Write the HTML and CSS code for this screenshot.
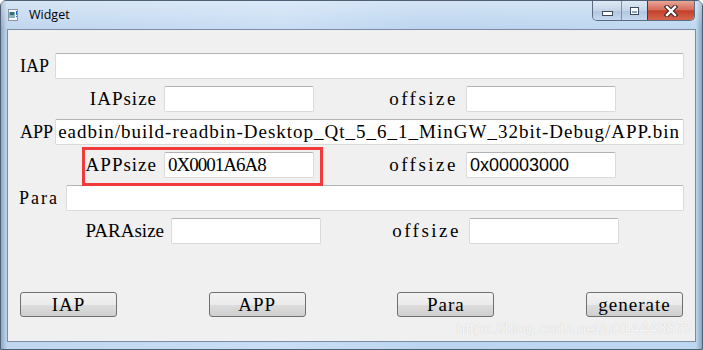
FILE: index.html
```html
<!DOCTYPE html>
<html lang="en">
<head>
    <meta charset="UTF-8">
    <title>Widget</title>
    <link rel="stylesheet" href="styles.css">
</head>
<body>
    <div class="window">
        <div class="titlebar">
            <svg class="app-icon" width="10" height="12" viewBox="0 0 10 12">
                <rect x="0.5" y="0.5" width="9" height="11" fill="#f4f6f8" stroke="#8a96a4"/>
                <rect x="1.5" y="3" width="5" height="6" fill="#2f6f78"/>
                <rect x="2" y="6" width="4" height="3" fill="#7fb4b8"/>
                <rect x="8" y="2" width="1" height="4" fill="#2a62c8"/>
                <rect x="8" y="7" width="1" height="1" fill="#2a62c8"/>
            </svg>
            <span class="title">Widget</span>
            <div class="caption-buttons">
                <div class="cap-btn min"><span class="min-glyph"></span></div>
                <div class="cap-btn max"><span class="max-glyph"></span></div>
                <div class="cap-btn close">
                    <svg width="14" height="12" viewBox="0 0 14 12">
                        <path d="M3 2 L11 10 M11 2 L3 10" stroke="#3a2a2a" stroke-width="4.5" stroke-linecap="square"/>
                        <path d="M3 2 L11 10 M11 2 L3 10" stroke="#ffffff" stroke-width="2.4" stroke-linecap="square"/>
                    </svg>
                </div>
            </div>
        </div>

        <div class="client">
            <div class="form">
                <div class="full-row">
                    <span class="name">IAP</span>
                    <div class="field"></div>
                </div>
                <div class="size-row">
                    <span class="name">IAPsize</span>
                    <div class="field small"></div>
                    <span class="name off">offsize</span>
                    <div class="field small"></div>
                </div>
                <div class="full-row">
                    <span class="name">APP</span>
                    <div class="field path"><span>eadbin/build-readbin-Desktop_Qt_5_6_1_MinGW_32bit-Debug/APP.bin</span></div>
                </div>
                <div class="size-row marked">
                    <span class="name">APPsize</span>
                    <div class="field small hex">0X0001A6A8</div>
                    <span class="name off">offsize</span>
                    <div class="field small sans">0x00003000</div>
                    <div class="highlight"></div>
                </div>
                <div class="full-row para">
                    <span class="name">Para</span>
                    <div class="field"></div>
                </div>
                <div class="size-row para">
                    <span class="name">PARAsize</span>
                    <div class="field small"></div>
                    <span class="name off">offsize</span>
                    <div class="field small"></div>
                </div>
            </div>

            <div class="actions">
                <button class="btn">IAP</button>
                <button class="btn">APP</button>
                <button class="btn">Para</button>
                <button class="btn">generate</button>
            </div>

            <div class="watermark">https://blog.csdn.net/u014448875</div>
        </div>
    </div>
</body>
</html>
```

FILE: styles.css
```css
body {
    margin: 0;
    width: 703px;
    height: 350px;
    overflow: hidden;
    background: #ffffff;
}

.window {
    box-sizing: border-box;
    width: 703px;
    height: 350px;
    display: flex;
    flex-direction: column;
    border: 1px solid #4f6075;
    border-radius: 6px 6px 0 0;
    background: linear-gradient(to right, #8fa9c4 0px, #bfd6ee 6px, #c9def4 40%, #bcd5ef 60%, #bed7f0 calc(100% - 6px), #8aa4bf 100%);
}

.titlebar {
    height: 28px;
    display: flex;
    align-items: flex-start;
    padding-left: 7px;
    background: linear-gradient(to bottom, rgba(255, 255, 255, 0.35), rgba(255, 255, 255, 0));
}

.app-icon {
    margin-top: 8px;
}

.title {
    margin-left: 11px;
    margin-top: 5px;
    font-family: "Open Sans", "Noto Sans", sans-serif;
    font-size: 12.5px;
    color: #000000;
}

.caption-buttons {
    margin-left: auto;
    margin-right: 7px;
    display: flex;
    height: 19px;
    border: 1px solid #5a6a80;
    border-top: none;
    border-radius: 0 0 5px 5px;
    overflow: hidden;
}

.cap-btn {
    display: flex;
    align-items: center;
    justify-content: center;
    height: 100%;
}

.cap-btn.min {
    width: 28px;
    background: linear-gradient(to bottom, #dfe9f5 0%, #c4d5e9 50%, #b0c5de 51%, #c5d8ee 100%);
    border-right: 1px solid #7f91a8;
}

.cap-btn.max {
    width: 25px;
    background: linear-gradient(to bottom, #dfe9f5 0%, #c4d5e9 50%, #b0c5de 51%, #c5d8ee 100%);
    border-right: 1px solid #6e2a22;
}

.cap-btn.close {
    width: 46px;
    background: linear-gradient(to bottom, #e8a597 0%, #d66e5c 45%, #c2402a 52%, #d8654f 100%);
}

.min-glyph {
    margin-top: 6px;
    width: 9px;
    height: 3px;
    background: #ffffff;
    border: 1px solid #3c4a5c;
}

.max-glyph {
    width: 7px;
    height: 6px;
    border: 1px solid #3c4a5c;
    box-shadow: inset 0 0 0 1px #ffffff, inset 0 2px 0 1px #ffffff;
    background: #8fa5bf;
}

.client {
    position: relative;
    flex: 1;
    margin: 0 6px 7px 6px;
    border: 1px solid #7b8ca2;
    background: #f0f0f0;
    font-family: "Liberation Serif", "Times New Roman", serif;
    font-size: 19px;
    letter-spacing: 1px;
    color: #000000;
}

.form {
    display: flex;
    flex-direction: column;
    gap: 7px;
    padding-top: 23px;
}

.full-row {
    display: flex;
    align-items: center;
    height: 26px;
    padding: 0 11px 0 12px;
}

.full-row .name {
    width: 35px;
    flex: none;
    font-size: 18px;
    letter-spacing: 0;
}

.full-row.para {
    padding-left: 11px;
}

.full-row.para .name {
    width: 47px;
    letter-spacing: 2px;
}

.size-row {
    position: relative;
    display: flex;
    align-items: center;
    height: 26px;
    padding-left: 69px;
}

.size-row .name {
    width: 80px;
    text-align: right;
    margin-right: 7px;
    flex: none;
}

.size-row .name.off {
    width: 144px;
    margin-right: 8px;
    letter-spacing: 2.5px;
}

.size-row.para {
    padding-left: 76px;
}

.size-row.para .name {
    letter-spacing: 0;
}

.size-row.para .name.off {
    width: 140px;
    letter-spacing: 2.5px;
}

.field {
    box-sizing: border-box;
    flex: 1;
    height: 26px;
    background: #ffffff;
    border: 1px solid #dadada;
    border-top-color: #b3b3b3;
    border-radius: 2px;
    padding: 0 3px;
    display: flex;
    align-items: center;
    white-space: nowrap;
    overflow: hidden;
}

.field.small {
    flex: none;
    width: 150px;
}

.field.path {
    justify-content: flex-end;
    padding-right: 3px;
}

.field.hex {
    letter-spacing: -1px;
}

.field.sans {
    font-family: "Liberation Sans", Arial, sans-serif;
    font-size: 18px;
    letter-spacing: 0;
}

.highlight {
    position: absolute;
    left: 74px;
    top: -5px;
    width: 241px;
    height: 39px;
    box-sizing: border-box;
    border: 3px solid #f23a3a;
}

.actions {
    display: flex;
    justify-content: space-between;
    padding: 0 12px;
    margin-top: 48px;
}

.btn {
    width: 97px;
    height: 25px;
    padding: 0;
    border: 1px solid #707070;
    border-radius: 3px;
    background: linear-gradient(to bottom, #f2f2f2 0%, #ebebeb 50%, #dddddd 51%, #cfcfcf 100%);
    font-family: "Liberation Serif", "Times New Roman", serif;
    font-size: 19px;
    letter-spacing: 1px;
    color: #000000;
    line-height: 23px;
}

.watermark {
    position: absolute;
    right: 2px;
    bottom: 3px;
    font-family: "Liberation Sans", Arial, sans-serif;
    font-size: 16px;
    letter-spacing: 0;
    color: rgba(255, 255, 255, 0.85);
    text-shadow: 0 0 1px rgba(0, 0, 0, 0.2);
}
```
